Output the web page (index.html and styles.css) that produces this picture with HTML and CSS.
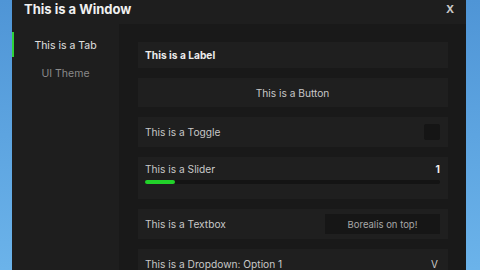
FILE: index.html
```html
<!DOCTYPE html>
<html lang="en">
<head>
  <meta charset="UTF-8">
  <meta name="viewport" content="width=device-width, initial-scale=1.0">
  <title>This is a Window</title>
  <link rel="stylesheet" href="styles.css">
</head>
<body>
  <div class="window">
    <div class="titlebar">
      <h1>This is a Window</h1>
      <span class="close">X</span>
    </div>
    <div class="body">
      <div class="sidebar">
        <div class="tab active">This is a Tab</div>
        <div class="tab">UI Theme</div>
      </div>
      <div class="content">
        <div class="item label">This is a Label</div>
        <div class="item button">This is a Button</div>
        <div class="item row">
          <span>This is a Toggle</span>
          <span class="toggle"></span>
        </div>
        <div class="item slider">
          <div class="slider-head">
            <span>This is a Slider</span>
            <span class="value">1</span>
          </div>
          <div class="track"><div class="fill" style="width: 10%"></div></div>
        </div>
        <div class="item row">
          <span>This is a Textbox</span>
          <span class="textbox">Borealis on top!</span>
        </div>
        <div class="item row">
          <span>This is a Dropdown: Option 1</span>
          <span class="arrow">V</span>
        </div>
      </div>
    </div>
  </div>
</body>
</html>
```

FILE: styles.css
```css
* {
  margin: 0;
  padding: 0;
  box-sizing: border-box;
  font-family: 'Inter', 'Open Sans', sans-serif;
}
body {
  background: linear-gradient(180deg, #4f95d6 0%, #6bb3ea 100%);
  height: 270px;
  overflow: hidden;
}
.window {
  margin-left: 12px;
  width: 454px;
  height: 270px;
  background: #1e1e1e;
  display: flex;
  flex-direction: column;
  overflow: hidden;
}
.titlebar {
  height: 24px;
  display: flex;
  align-items: flex-start;
  justify-content: space-between;
  padding: 1px 12px 0 12px;
  flex-shrink: 0;
}
.titlebar h1 {
  font-size: 13px;
  font-weight: 700;
  color: #f0f0f0;
}
.close {
  font-size: 11px;
  font-weight: 700;
  color: #c8c8c8;
  margin-top: 1px;
}
.body {
  display: flex;
  flex: 1;
}
.sidebar {
  width: 107px;
  padding-top: 8px;
  display: flex;
  flex-direction: column;
  gap: 4px;
}
.tab {
  height: 25px;
  display: flex;
  align-items: center;
  justify-content: center;
  font-size: 10.5px;
  color: #8a8a8a;
}
.tab.active {
  color: #e0e0e0;
  padding-top: 2px;
  box-shadow: inset 2px 0 0 #2ed33a;
}
.content {
  flex: 1;
  background: #191919;
  padding: 18px 18px 0 19px;
  display: flex;
  flex-direction: column;
  gap: 10px;
}
.item {
  background: #1f1f1f;
  font-size: 10.2px;
  color: #c8c8c8;
  padding: 0 8px 0 7px;
  flex-shrink: 0;
}
.label {
  height: 26px;
  display: flex;
  align-items: center;
  font-weight: 700;
  color: #ececec;
}
.button {
  height: 29px;
  display: flex;
  align-items: center;
  justify-content: center;
}
.row {
  height: 30px;
  display: flex;
  align-items: center;
  justify-content: space-between;
}
.toggle {
  width: 16px;
  height: 16px;
  background: #151515;
  border-radius: 2px;
}
.slider {
  height: 42px;
  padding-top: 6px;
}
.slider-head {
  display: flex;
  justify-content: space-between;
}
.value {
  font-weight: 700;
  color: #f0f0f0;
}
.track {
  margin-top: 5px;
  height: 4px;
  background: #141414;
  border-radius: 2px;
}
.fill {
  height: 4px;
  background: #22d12a;
  border-radius: 2px;
}
.textbox {
  width: 115px;
  height: 20px;
  background: #161616;
  display: flex;
  align-items: center;
  justify-content: center;
  font-size: 9.5px;
  color: #a8a8a8;
}
.arrow {
  font-size: 10px;
  color: #c8c8c8;
  padding-right: 2px;
}
```
